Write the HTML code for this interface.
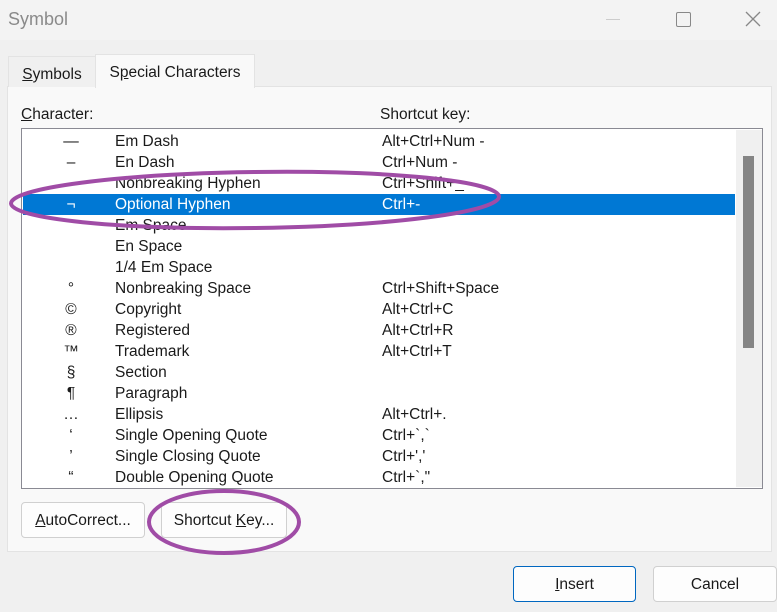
<!DOCTYPE html><html><head><style>
body{margin:0;width:777px;height:612px;background:#f0f0f0;font-family:"Liberation Sans",sans-serif;font-size:15.5px;color:#1a1a1a;position:relative;overflow:hidden}
.a{position:absolute}
.title{left:8px;top:9px;font-size:18px;color:#8a8a8a}
.tab{top:54px;height:33px;line-height:35px;text-align:center}
.panel{left:7px;top:86px;width:763px;height:464px;background:#f9f9f9;border:1px solid #e3e3e3}
.list{left:21px;top:128px;width:740px;height:359px;background:#fff;border:1px solid #8a8a93}
.row{position:absolute;left:1px;width:712px;height:21px;line-height:22px}
.row span{position:absolute}
.c{left:28px;width:40px;text-align:center}
.n{left:92px}
.s{left:359px}
.btn{height:34px;line-height:36px;text-align:center;background:#fdfdfd;border:1px solid #d0d0d0;border-radius:4px}
u{text-decoration:underline}
</style></head><body>
<div class="a" style="left:0;top:0;width:777px;height:40px;background:#f3f3f3"></div>
<div class="a title">Symbol</div>
<div class="a" style="left:606px;top:19px;width:14px;height:1px;background:#ccc"></div>
<div class="a" style="left:676px;top:12px;width:13px;height:13px;border:1px solid #888;border-radius:2px"></div>
<svg class="a" style="left:744px;top:10px" width="18" height="18"><path d="M2 2L16 16M16 2L2 16" stroke="#888" stroke-width="1.3"/></svg>
<div class="a panel"></div>
<div class="a tab" style="left:8px;width:86px;background:#f0f0f0;border:1px solid #e3e3e3;border-bottom:none;top:56px;height:30px"><u>S</u>ymbols</div>
<div class="a tab" style="left:95px;width:158px;background:#f9f9f9;border:1px solid #e3e3e3;border-bottom:none">S<u>p</u>ecial Characters</div>
<div class="a" style="left:21px;top:106px"><u>C</u>haracter:</div>
<div class="a" style="left:380px;top:106px">Shortcut key:</div>
<div class="a list">
<div class="a" style="left:714px;top:1px;width:26px;height:357px;background:#f0f0f0"></div>
<div class="a" style="left:721px;top:27px;width:11px;height:192px;background:#858585"></div>
<div class="row" style="top:2px"><span class="c">—</span><span class="n">Em Dash</span><span class="s">Alt+Ctrl+Num -</span></div>
<div class="row" style="top:23px"><span class="c">–</span><span class="n">En Dash</span><span class="s">Ctrl+Num -</span></div>
<div class="row" style="top:44px"><span class="c"></span><span class="n">Nonbreaking Hyphen</span><span class="s">Ctrl+Shift+_</span></div>
<div class="row" style="top:65px;background:#0078d4;color:#fff"><span class="c">¬</span><span class="n">Optional Hyphen</span><span class="s">Ctrl+-</span></div>
<div class="row" style="top:86px"><span class="n">Em Space</span></div>
<div class="row" style="top:107px"><span class="n">En Space</span></div>
<div class="row" style="top:128px"><span class="n">1/4 Em Space</span></div>
<div class="row" style="top:149px"><span class="c">°</span><span class="n">Nonbreaking Space</span><span class="s">Ctrl+Shift+Space</span></div>
<div class="row" style="top:170px"><span class="c">©</span><span class="n">Copyright</span><span class="s">Alt+Ctrl+C</span></div>
<div class="row" style="top:191px"><span class="c">®</span><span class="n">Registered</span><span class="s">Alt+Ctrl+R</span></div>
<div class="row" style="top:212px"><span class="c">™</span><span class="n">Trademark</span><span class="s">Alt+Ctrl+T</span></div>
<div class="row" style="top:233px"><span class="c">§</span><span class="n">Section</span></div>
<div class="row" style="top:254px"><span class="c">¶</span><span class="n">Paragraph</span></div>
<div class="row" style="top:275px"><span class="c">…</span><span class="n">Ellipsis</span><span class="s">Alt+Ctrl+.</span></div>
<div class="row" style="top:296px"><span class="c">‘</span><span class="n">Single Opening Quote</span><span class="s">Ctrl+`,`</span></div>
<div class="row" style="top:317px"><span class="c">’</span><span class="n">Single Closing Quote</span><span class="s">Ctrl+','</span></div>
<div class="row" style="top:338px"><span class="c">“</span><span class="n">Double Opening Quote</span><span class="s">Ctrl+`,"</span></div>
</div>
<div class="a btn" style="left:21px;top:502px;width:122px"><u>A</u>utoCorrect...</div>
<div class="a btn" style="left:161px;top:502px;width:124px">Shortcut <u>K</u>ey...</div>
<div class="a btn" style="left:513px;top:566px;width:121px;border-color:#0067c0"><u>I</u>nsert</div>
<div class="a btn" style="left:653px;top:566px;width:122px">Cancel</div>
<svg class="a" style="left:0;top:0" width="777" height="612">
<ellipse cx="255" cy="200" rx="244" ry="28" fill="none" stroke="#a04ca6" stroke-width="4" transform="rotate(-0.8 255 200)"/>
<ellipse cx="224" cy="522" rx="75" ry="31" fill="none" stroke="#a04ca6" stroke-width="4"/>
</svg>
</body></html>
